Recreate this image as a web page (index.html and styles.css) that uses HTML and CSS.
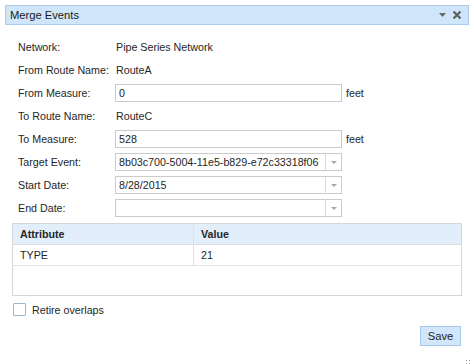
FILE: index.html
```html
<!DOCTYPE html>
<html lang="en">
<head>
    <meta charset="UTF-8">
    <title>Merge Events</title>
    <link rel="stylesheet" href="styles.css">
</head>
<body>
<div class="dialog">
    <div class="titlebar">
        <span class="title">Merge Events</span>
        <span class="tools">
            <svg class="menu" width="7" height="4" viewBox="0 0 7 4"><path d="M0 0h7L3.5 4z" fill="#6b6b6b"/></svg>
            <svg class="close" width="10" height="10" viewBox="0 0 10 10"><path d="M1.5 1.5l7 7M8.5 1.5l-7 7" stroke="#5f5f5f" stroke-width="2.2"/></svg>
        </span>
    </div>
    <div class="content">
        <div class="fields">
            <div class="label">Network:</div>
            <div class="value">Pipe Series Network</div>
            <div></div>

            <div class="label">From Route Name:</div>
            <div class="value">RouteA</div>
            <div></div>

            <div class="label">From Measure:</div>
            <div class="input">0</div>
            <div class="unit">feet</div>

            <div class="label">To Route Name:</div>
            <div class="value">RouteC</div>
            <div></div>

            <div class="label">To Measure:</div>
            <div class="input">528</div>
            <div class="unit">feet</div>

            <div class="label">Target Event:</div>
            <div class="combo"><span class="combo_text">8b03c700-5004-11e5-b829-e72c33318f06</span><span class="combo_btn"></span></div>
            <div></div>

            <div class="label">Start Date:</div>
            <div class="combo"><span class="combo_text">8/28/2015</span><span class="combo_btn"></span></div>
            <div></div>

            <div class="label">End Date:</div>
            <div class="combo"><span class="combo_text"></span><span class="combo_btn"></span></div>
            <div></div>
        </div>

        <div class="grid">
            <div class="grid_row grid_head">
                <div class="cell col1">Attribute</div>
                <div class="cell">Value</div>
            </div>
            <div class="grid_row">
                <div class="cell col1">TYPE</div>
                <div class="cell">21</div>
            </div>
        </div>

        <label class="check">
            <span class="check_box"></span>
            <span>Retire overlaps</span>
        </label>

        <div class="actions">
            <button class="save" type="button">Save</button>
        </div>
    </div>
    <div class="grip"></div>
</div>
</body>
</html>
```

FILE: styles.css
```css
html, body {
    margin: 0;
    background: #fff;
}

body {
    font-family: "Liberation Sans", Arial, sans-serif;
    font-size: 10.7px;
    color: #262626;
}

.dialog {
    position: relative;
    width: 474px;
    height: 364px;
}

.titlebar {
    margin: 5px 5px 0;
    height: 20px;
    box-sizing: border-box;
    border: 1px solid #a9cbe9;
    background-color: #cfe5f9;
    display: flex;
    align-items: center;
    padding: 0 6px 0 4px;
}

.title {
    flex: 1;
    font-size: 11.2px;
    color: #1a1a1a;
}

.tools {
    display: flex;
    align-items: center;
    gap: 6px;
}

.content {
    padding: 0 12px;
}

.fields {
    display: grid;
    grid-template-columns: 97px 227px auto;
    grid-auto-rows: 23px;
    align-items: center;
    padding-left: 6px;
    margin-top: 10px;
}

.value {
    padding-left: 1px;
}

.input,
.combo {
    height: 18px;
    box-sizing: border-box;
    border: 1px solid #cbcbcb;
    background: #fff;
}

.input {
    line-height: 16px;
    padding: 0 3px;
}

.unit {
    padding-left: 4px;
}

.combo {
    display: flex;
}

.combo_text {
    flex: 1;
    line-height: 16px;
    padding: 0 3px;
    overflow: hidden;
    white-space: nowrap;
}

.combo_btn {
    width: 15px;
    border-left: 1px solid #dadada;
    position: relative;
}

.combo_btn::after {
    content: "";
    position: absolute;
    left: 5px;
    top: 7px;
    border-left: 3px solid transparent;
    border-right: 3px solid transparent;
    border-top: 3px solid #a8a8a8;
}

.grid {
    margin-top: 4px;
    height: 73px;
    box-sizing: border-box;
    border: 1px solid #d6d6d6;
}

.grid_row {
    display: flex;
    height: 20px;
    align-items: stretch;
    border-bottom: 1px solid #e2e2e2;
}

.grid_head {
    background-color: #e2eefa;
    font-weight: bold;
    border-bottom-color: #d3dde8;
}

.cell {
    display: flex;
    align-items: center;
    padding-left: 7px;
}

.col1 {
    width: 173px;
    border-right: 1px solid #e0e0e0;
}

.check {
    display: flex;
    align-items: center;
    gap: 6px;
    margin-top: 7px;
    margin-left: 1px;
}

.check_box {
    width: 13px;
    height: 13px;
    box-sizing: border-box;
    border: 1px solid #9fb6cd;
    border-radius: 1px;
    background: #fff;
}

.actions {
    display: flex;
    justify-content: flex-end;
    margin-top: 10px;
    padding-right: 1px;
}

.save {
    width: 41px;
    height: 20px;
    border: 1px solid #a8c9ea;
    background-color: #d0e6fa;
    font-family: inherit;
    font-size: 11.2px;
    color: #222;
    padding: 0;
}

.grip {
    position: absolute;
    right: 2px;
    bottom: 3px;
    width: 7px;
    height: 7px;
    background-image: radial-gradient(circle, #9a9a9a 0.8px, transparent 1px);
    background-size: 3px 3px;
}
```
